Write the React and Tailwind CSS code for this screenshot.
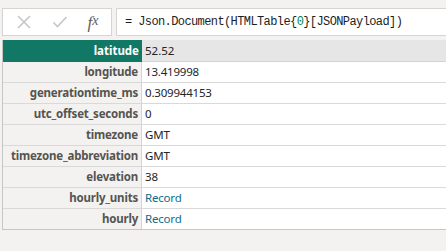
const rows = [
  ['longitude', '13.419998'],
  ['generationtime_ms', '0.309944153'],
  ['utc_offset_seconds', '0'],
  ['timezone', 'GMT'],
  ['timezone_abbreviation', 'GMT'],
  ['elevation', '38'],
  ['hourly_units', 'Record', true],
  ['hourly', 'Record', true],
]

function XIcon() {
  return (
    <svg width="16" height="16" viewBox="0 0 16 16" fill="none" stroke="#c8c6c4" strokeWidth="1.6">
      <path d="M2 2 L14 14 M14 2 L2 14" />
    </svg>
  )
}

function CheckIcon() {
  return (
    <svg width="16" height="16" viewBox="0 0 16 16" fill="none" stroke="#c8c6c4" strokeWidth="1.6">
      <path d="M1.5 8.5 L5.5 12.5 L14.5 3" />
    </svg>
  )
}

export default function App() {
  return (
    <div className="w-[446px] h-[251px] bg-[#f3f2f1] overflow-hidden" style={{ fontFamily: '"Noto Sans", "Open Sans", sans-serif' }}>
      {/* formula bar */}
      <div className="flex pt-[8px] h-[36px]">
        <div className="ml-[2px] w-[110px] h-[28px] bg-white border border-[#d6d4d2] flex items-center">
          <div className="w-[40px] flex justify-center pl-[2px]"><XIcon /></div>
          <div className="w-[34px] flex justify-center"><CheckIcon /></div>
          <div className="w-[32px] flex justify-center text-[#605e5c] text-[17px] italic leading-none" style={{ fontFamily: '"Liberation Serif", serif' }}>
            f<span className="text-[14px]">x</span>
          </div>
        </div>
        <div className="ml-[4px] flex-1 h-[28px] bg-white border border-r-0 border-[#d6d4d2] flex items-center pl-[8px] text-[12px] tracking-[-0.6px] text-[#1e1e1e]" style={{ fontFamily: '"Liberation Mono", monospace' }}>
          = Json.Document(HTMLTable{'{'}<span className="text-[#098658]">0</span>{'}'}[JSONPayload])
        </div>
      </div>

      {/* record table */}
      <div className="mt-[4px] ml-[2px] border-l border-b border-[#c8c6c4] text-[11.5px]">
        <div className="grid grid-cols-[139px_1fr] h-[21px]">
          <div className="bg-[#117865] text-white font-bold text-right pr-[3px] leading-[21px]">latitude</div>
          <div className="bg-[#e6e6e6] text-[#252423] pl-[3px] leading-[21px] border-b border-[#d6d4d2]">52.52</div>
        </div>
        {rows.map(([k, v, rec]) => (
          <div key={k} className="grid grid-cols-[139px_1fr] h-[21px] border-t border-[#d9d9d9]">
            <div className="bg-[#f3f2f1] text-[#56544f] font-bold text-right pr-[3px] leading-[20px] border-r border-[#d6d4d2] tracking-[-0.2px]">{k}</div>
            <div className={`bg-white pl-[3px] leading-[20px] tracking-[-0.2px] ${rec ? 'text-[#0e6d8a]' : 'text-[#252423]'}`}>{v}</div>
          </div>
        ))}
      </div>
    </div>
  )
}
